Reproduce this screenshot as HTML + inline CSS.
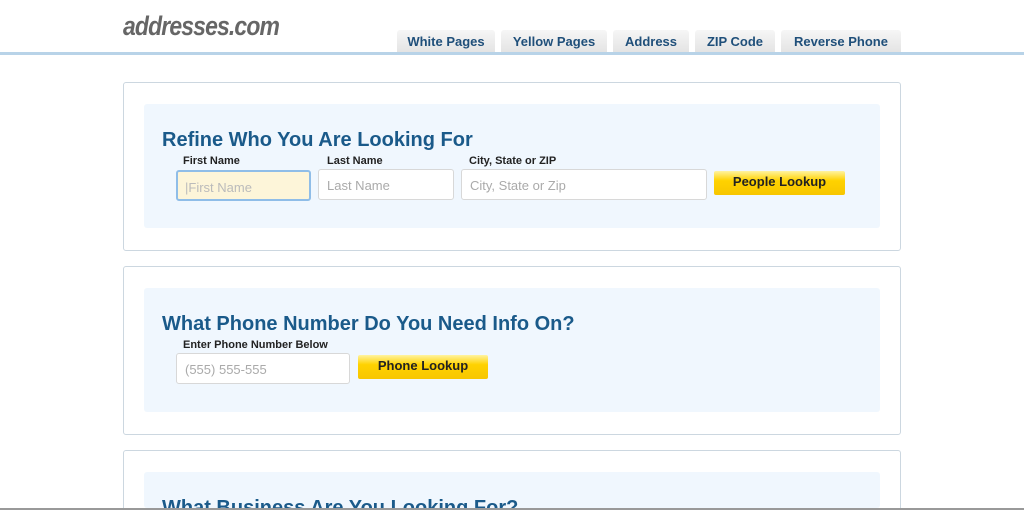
<!DOCTYPE html><html style="width:1024px;height:510px;overflow:hidden"><head><style>
body{margin:0;width:1024px;height:510px;overflow:hidden;background:#fff;font-family:"Liberation Sans",Arial,sans-serif;position:relative}
.abs{position:absolute}
.logo{left:123px;top:11px;font-size:27px;font-style:italic;font-weight:bold;color:#666;letter-spacing:-1px;transform:scaleX(0.85);transform-origin:left top}
.tab{top:30px;height:22px;background:linear-gradient(#f6f6f6,#e4e4e4);border-radius:3px 3px 0 0;color:#1f4f7a;font-weight:bold;font-size:13px;text-align:center;line-height:23px}
.line{left:0;top:52px;width:1024px;height:3px;background:#b8d3e8}
.box{left:123px;width:776px;border:1px solid #ccd7e0;border-radius:3px}
.in{left:144px;width:736px;background:#f0f7fe;border-radius:3px}
h2{position:absolute;margin:0;font-size:20px;color:#1a5a8a;font-weight:bold}
.lb{font-size:11px;font-weight:bold;color:#222}
.inp{height:31px;border:1px solid #d8d8d8;border-radius:3px;background:#fff;color:#aaa;font-size:13px;line-height:31px;padding-left:8px;box-sizing:border-box}
.btn{height:24px;background:linear-gradient(#fff3a0,#ffd200 40%,#f7c600);border-radius:2px;font-weight:bold;font-size:13px;color:#222;text-align:center;line-height:22px}
</style></head><body>
<div class="abs logo">addresses.com</div>
<div class="abs tab" style="left:397px;width:98px">White Pages</div>
<div class="abs tab" style="left:501px;width:106px">Yellow Pages</div>
<div class="abs tab" style="left:613px;width:76px">Address</div>
<div class="abs tab" style="left:695px;width:80px">ZIP Code</div>
<div class="abs tab" style="left:781px;width:120px">Reverse Phone</div>
<div class="abs line"></div>

<div class="abs box" style="top:82px;height:167px"></div>
<div class="abs in" style="top:104px;height:124px"></div>
<h2 style="left:162px;top:129px">Refine Who You Are Looking For</h2>
<div class="abs lb" style="left:183px;top:155px">First Name</div>
<div class="abs lb" style="left:327px;top:155px">Last Name</div>
<div class="abs lb" style="left:469px;top:155px">City, State or ZIP</div>
<div class="abs inp" style="left:176px;top:170px;width:135px;background:#fdf5d9;border:2px solid #8fbde8;color:#bbb;padding-left:7px">|First Name</div>
<div class="abs inp" style="left:318px;top:169px;width:136px">Last Name</div>
<div class="abs inp" style="left:461px;top:169px;width:246px">City, State or Zip</div>
<div class="abs btn" style="left:714px;top:171px;width:131px">People Lookup</div>

<div class="abs box" style="top:266px;height:167px"></div>
<div class="abs in" style="top:288px;height:124px"></div>
<h2 style="left:162px;top:313px">What Phone Number Do You Need Info On?</h2>
<div class="abs lb" style="left:183px;top:339px">Enter Phone Number Below</div>
<div class="abs inp" style="left:176px;top:353px;width:174px">(555) 555-555</div>
<div class="abs btn" style="left:358px;top:355px;width:130px">Phone Lookup</div>

<div class="abs box" style="top:450px;height:58px;border-bottom:none;border-radius:3px 3px 0 0"></div>
<div class="abs in" style="top:472px;height:36px"></div>
<h2 style="left:162px;top:497px">What Business Are You Looking For?</h2>
<div class="abs" style="left:0;top:508px;width:1024px;height:2px;background:#999"></div>
</body></html>
